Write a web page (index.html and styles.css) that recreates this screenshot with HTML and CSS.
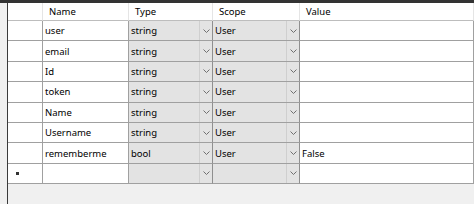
FILE: index.html
```html
<!DOCTYPE html>
<html lang="en">
<head>
  <meta charset="UTF-8">
  <title>Settings</title>
  <link rel="stylesheet" href="styles.css">
</head>
<body>
  <div class="frame">
    <div class="panel">
      <div class="grid">
        <!-- cabeçalho -->
        <div class="hd"></div>
        <div class="hd">Name</div>
        <div class="hd">Type</div>
        <div class="hd">Scope</div>
        <div class="hd">Value</div>

        <div class="rh"></div>
        <div class="cell">user</div>
        <div class="cell combo"><span class="txt">string</span><span class="btn"></span></div>
        <div class="cell combo"><span class="txt">User</span><span class="btn"></span></div>
        <div class="cell"></div>

        <div class="rh"></div>
        <div class="cell">email</div>
        <div class="cell combo"><span class="txt">string</span><span class="btn"></span></div>
        <div class="cell combo"><span class="txt">User</span><span class="btn"></span></div>
        <div class="cell"></div>

        <div class="rh"></div>
        <div class="cell">Id</div>
        <div class="cell combo"><span class="txt">string</span><span class="btn"></span></div>
        <div class="cell combo"><span class="txt">User</span><span class="btn"></span></div>
        <div class="cell"></div>

        <div class="rh"></div>
        <div class="cell">token</div>
        <div class="cell combo"><span class="txt">string</span><span class="btn"></span></div>
        <div class="cell combo"><span class="txt">User</span><span class="btn"></span></div>
        <div class="cell"></div>

        <div class="rh"></div>
        <div class="cell">Name</div>
        <div class="cell combo"><span class="txt">string</span><span class="btn"></span></div>
        <div class="cell combo"><span class="txt">User</span><span class="btn"></span></div>
        <div class="cell"></div>

        <div class="rh"></div>
        <div class="cell">Username</div>
        <div class="cell combo"><span class="txt">string</span><span class="btn"></span></div>
        <div class="cell combo"><span class="txt">User</span><span class="btn"></span></div>
        <div class="cell"></div>

        <div class="rh"></div>
        <div class="cell">rememberme</div>
        <div class="cell combo"><span class="txt">bool</span><span class="btn"></span></div>
        <div class="cell combo"><span class="txt">User</span><span class="btn"></span></div>
        <div class="cell">False</div>

        <!-- linha nova -->
        <div class="rh"><span class="star"></span></div>
        <div class="cell"></div>
        <div class="cell combo"><span class="txt"></span><span class="btn"></span></div>
        <div class="cell combo"><span class="txt"></span><span class="btn"></span></div>
        <div class="cell"></div>
      </div>
    </div>
  </div>
</body>
</html>
```

FILE: styles.css
```css
html, body {
  margin: 0;
  height: 100%;
  background-color: #f0f0f0;
  font-family: "Noto Sans", sans-serif;
  font-size: 9.5px;
  color: #000;
}
.frame {
  border-top: 3px solid #333;
  height: 201px;
}
.panel {
  margin-left: 7px;
  border-left: 1px solid #3a3a3a;
  height: 100%;
}
.grid {
  display: grid;
  grid-template-columns: 35px 86px 84px 87px 1fr;
  grid-template-rows: 18px repeat(8, 20.4px);
  background-color: #fff;
}
.hd {
  display: flex;
  align-items: center;
  padding-left: 6px;
  border-right: 1px solid #e5e5e5;
  border-bottom: 1px solid #bdbdbd;
}
.rh, .cell {
  display: flex;
  align-items: center;
  border-right: 1px solid #a0a0a0;
  border-bottom: 1px solid #a0a0a0;
}
.cell {
  padding-left: 2px;
}
.combo {
  padding-left: 0;
  background-color: #e3e3e3;
  border-right-color: #8f8f8f;
}
.combo .txt {
  flex: 1;
  padding-left: 2px;
}
.combo .btn {
  width: 12px;
  height: 100%;
  border-left: 1px solid #cfcfcf;
  background: url("data:image/svg+xml,%3Csvg xmlns='http://www.w3.org/2000/svg' width='7' height='4' viewBox='0 0 7 4'%3E%3Cpath d='M0.5 0.5 L3.5 3.5 L6.5 0.5' fill='none' stroke='%23707070' stroke-width='1'/%3E%3C/svg%3E") no-repeat center;
}
.star {
  width: 3px;
  height: 3px;
  margin-left: 8px;
  background-color: #333;
}
```
